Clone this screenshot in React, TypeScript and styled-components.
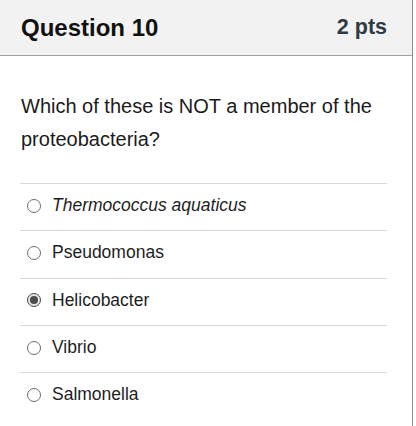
import styled, { createGlobalStyle } from "styled-components";

const GlobalStyle = createGlobalStyle`
  html, body {
    margin: 0;
    padding: 0;
    background: #ffffff;
  }
  body {
    font-family: "Liberation Sans", Arial, sans-serif;
  }
`;

const Card = styled.div`
  width: 413px;
  border-right: 1px solid #8c8c8c;
  min-height: 426px;
  box-sizing: border-box;
  background: #ffffff;
`;

const Header = styled.header`
  height: 55px;
  display: flex;
  justify-content: space-between;
  align-items: center;
  padding: 0 25px 0 21px;
  background-color: #f2f2f2;
  border-bottom: 1px solid #a0a0a0;
`;

const Title = styled.h2`
  margin: 0;
  font-size: 24px;
  font-weight: 700;
  color: #111111;
`;

const Points = styled.span`
  font-size: 21.5px;
  font-weight: 700;
  color: #2d3b45;
`;

const Body = styled.div`
  padding: 34px 25px 0 20px;
`;

const Prompt = styled.p`
  margin: 0 0 27px 1px;
  font-size: 20px;
  line-height: 33px;
  color: #1b1b1b;
`;

const Answers = styled.ul`
  list-style: none;
  margin: 0;
  padding: 0;
`;

const Answer = styled.li`
  height: 47.3px;
  display: flex;
  align-items: center;
  gap: 11px;
  padding: 0 0 3px 7px;
  border-top: 1px solid #d9d9d9;
  box-sizing: border-box;
`;

const Radio = styled.span<{ $checked: boolean }>`
  width: 14px;
  height: 14px;
  box-sizing: border-box;
  border-radius: 50%;
  border: 1px solid ${(p) => (p.$checked ? "#4a4a4a" : "#6e6e6e")};
  background: ${(p) => (p.$checked ? "#e6e6e6" : "#ffffff")};
  display: flex;
  align-items: center;
  justify-content: center;
  flex-shrink: 0;

  &::after {
    content: "";
    display: ${(p) => (p.$checked ? "block" : "none")};
    width: 8px;
    height: 8px;
    border-radius: 50%;
    background: #4b4b4b;
  }
`;

const Label = styled.span<{ $italic?: boolean }>`
  font-size: 17.5px;
  color: #1e1e1e;
  font-style: ${(p) => (p.$italic ? "italic" : "normal")};
`;

const options = [
  { text: "Thermococcus aquaticus", italic: true, checked: false },
  { text: "Pseudomonas", italic: false, checked: false },
  { text: "Helicobacter", italic: false, checked: true },
  { text: "Vibrio", italic: false, checked: false },
  { text: "Salmonella", italic: false, checked: false },
];

const App = () => {
  return (
    <>
      <GlobalStyle />
      <Card>
        <Header>
          <Title>Question 10</Title>
          <Points>2 pts</Points>
        </Header>
        <Body>
          <Prompt>Which of these is NOT a member of the proteobacteria?</Prompt>
          <Answers>
            {options.map((o) => (
              <Answer key={o.text}>
                <Radio $checked={o.checked} />
                <Label $italic={o.italic}>{o.text}</Label>
              </Answer>
            ))}
          </Answers>
        </Body>
      </Card>
    </>
  );
};

export default App;
